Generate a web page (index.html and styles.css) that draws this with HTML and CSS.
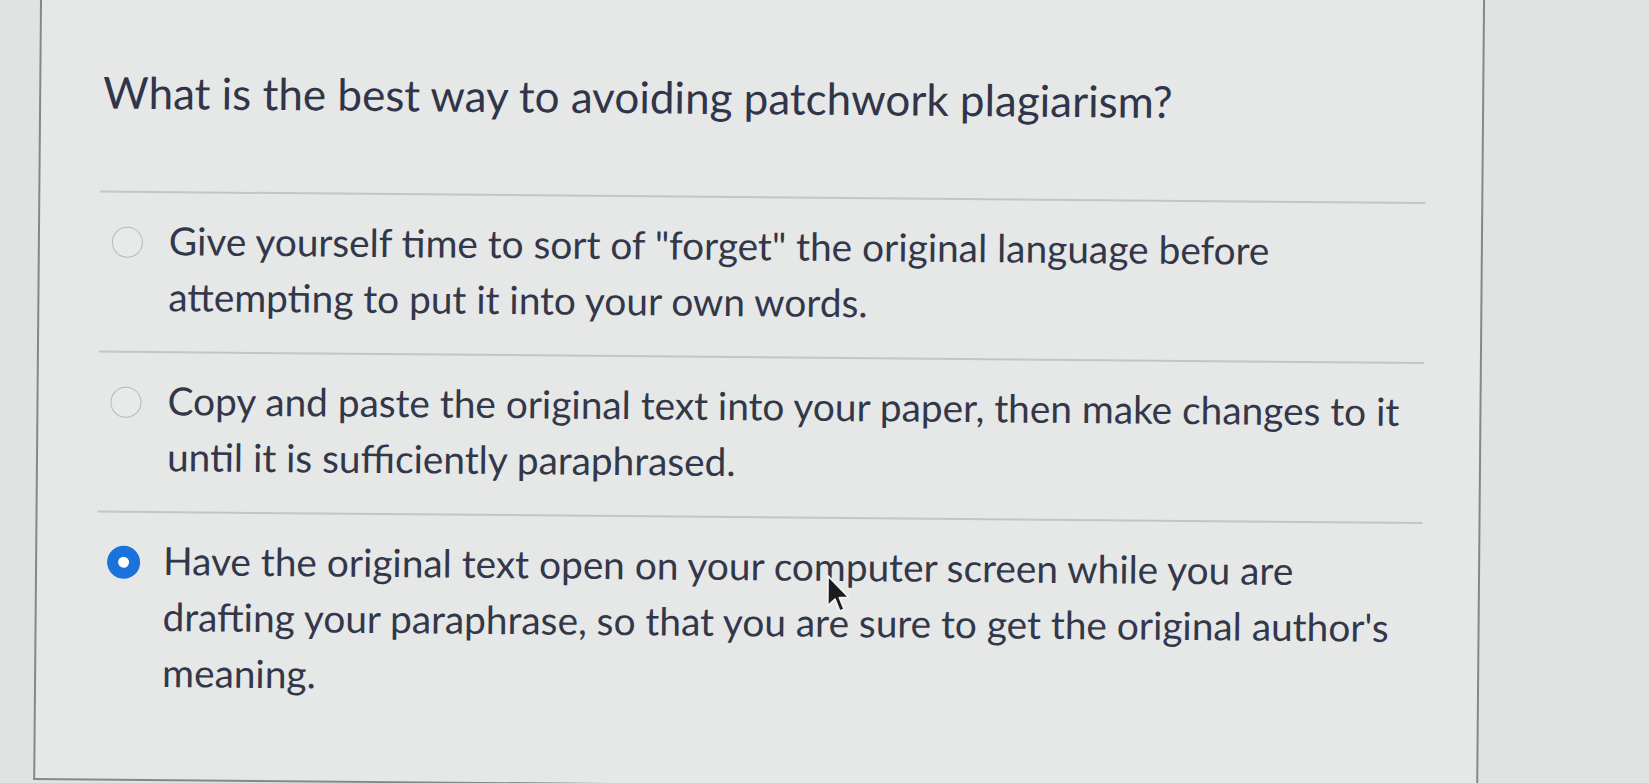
FILE: index.html
```html
<!DOCTYPE html>
<html lang="en">
<head>
<meta charset="utf-8">
<title>Quiz question</title>
<link rel="stylesheet" href="styles.css">
</head>
<body>
<div class="card">
  <div class="content">
    <h1 class="question">What is the best way to avoiding patchwork plagiarism?</h1>
    <div class="answers">
      <label class="answer">
        <span class="radio"></span>
        <span class="answer-text">Give yourself time to sort of "forget" the original language before attempting to put it into your own words.</span>
      </label>
      <label class="answer">
        <span class="radio"></span>
        <span class="answer-text">Copy and paste the original text into your paper, then make changes to it until it is sufficiently paraphrased.</span>
      </label>
      <label class="answer">
        <span class="radio radio-checked"></span>
        <span class="answer-text">Have the original text open on your computer screen while you are drafting your paraphrase, so that you are sure to get the original author's meaning.</span>
      </label>
    </div>
  </div>
  <svg class="cursor" width="24" height="40" viewBox="0 0 12 20" aria-hidden="true">
    <path d="M1 1 L1 16 L4.6 12.6 L7 18.5 L9.2 17.6 L6.8 11.8 L11.6 11.8 Z" fill="#1b1c1f" stroke="#f2f2f2" stroke-width="0.9" stroke-linejoin="round"/>
  </svg>
</div>
</body>
</html>
```

FILE: styles.css
```css
html, body {
  margin: 0;
  padding: 0;
  height: 100%;
  overflow: hidden;
}

body {
  background: #e1e2e2;
  font-family: Lato, "Open Sans", "Liberation Sans", sans-serif;
  color: #33374a;
}

.card {
  position: relative;
  box-sizing: border-box;
  margin-top: -30px;
  margin-left: 40px;
  width: 1445px;
  height: 810px;
  background: #e6e7e7;
  border-left: 2px solid #85888b;
  border-right: 2px solid #85888b;
  border-bottom: 2px solid #85888b;
  transform: rotate(0.5deg);
  transform-origin: 0 30px;
}

.content {
  padding: 95px 56px 0 60px;
}

.question {
  margin: 0 0 0 2px;
  font-size: 44px;
  font-weight: 400;
  line-height: 1.2;
  color: #31354a;
  letter-spacing: 0;
}

.answers {
  margin-top: 72px;
}

.answer {
  display: flex;
  align-items: flex-start;
  border-top: 2px solid #c3c5c6;
  padding: 19px 0 27px 12px;
}

.radio {
  flex: none;
  box-sizing: border-box;
  width: 31px;
  height: 31px;
  margin-top: 15px;
  border-radius: 50%;
  border: 1.5px solid #b7b9ba;
  background: #e8e9e9;
}

.radio-checked {
  width: 33px;
  height: 33px;
  margin-top: 14px;
  margin-left: -2px;
  border: 11.5px solid #1a72dc;
  background: #ffffff;
}

.radio-checked + .answer-text {
  margin-left: 23px;
}

.answer-text {
  margin-left: 26px;
  font-size: 38.8px;
  line-height: 56px;
  color: #33374a;
}

.cursor {
  position: absolute;
  left: 789px;
  top: 597px;
}
```
